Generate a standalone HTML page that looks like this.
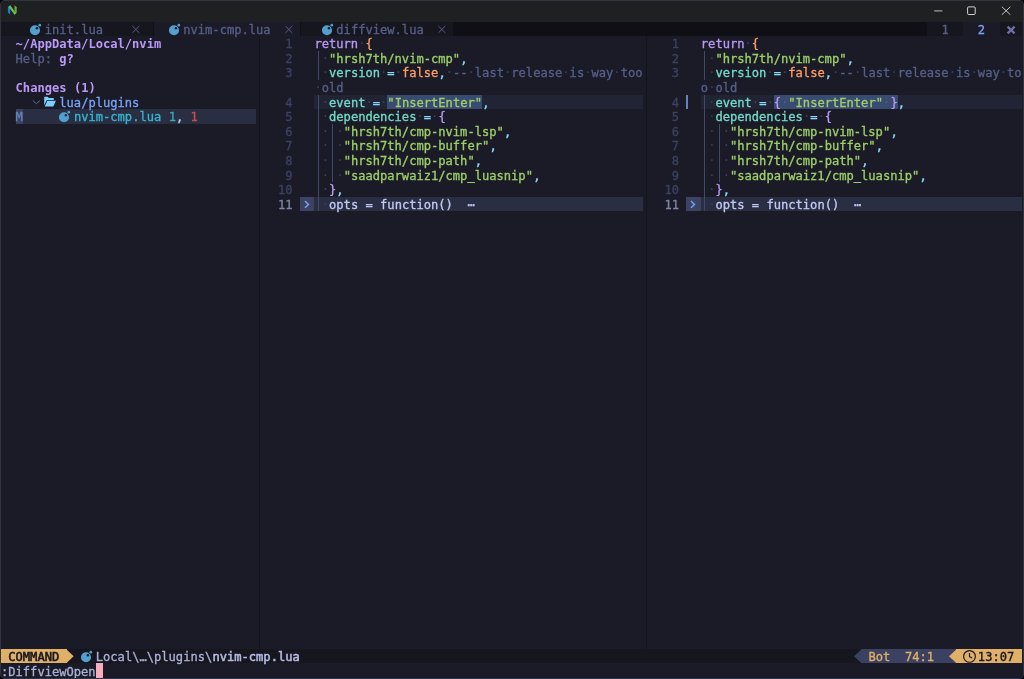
<!DOCTYPE html>
<html lang="en">
<head>
<meta charset="utf-8">
<title>nvim - DiffviewOpen</title>
<style>
html,body{margin:0;padding:0;}
body{width:1024px;height:679px;overflow:hidden;background:#02040f;position:relative;
  font-family:"DejaVu Sans Mono","Liberation Mono",monospace;font-size:12.108px;}
#win{position:absolute;left:0;top:0;width:1024px;height:679px;box-sizing:border-box;
  background:#1a1b26;border:1px solid #30343d;border-bottom-color:#2d3246;border-radius:5px;overflow:hidden;}
#scr{position:absolute;left:-1px;top:-1px;width:1024px;height:679px;will-change:transform;}
#title{position:absolute;left:0;top:0;width:1024px;height:22.1px;background:#1e2022;z-index:5;}
.tb{z-index:6;}
.r{position:absolute;display:block;}
.t{position:absolute;display:block;height:14.59px;line-height:14.59px;white-space:pre;
  font-kerning:none;font-variant-ligatures:none;letter-spacing:0;}
.t{-webkit-text-stroke:0.32px currentColor;}
.b{font-weight:bold;-webkit-text-stroke:0;}
.d{-webkit-text-stroke:0;margin-top:-1px;}
</style>
</head>
<body>
<div id="win"><div id="scr">
<div id="title"></div>
<svg class="r tb" style="left:0;top:0" width="26" height="22" viewBox="0 0 26 22">
<defs><linearGradient id="ng" x1="0" y1="0" x2="0" y2="1"><stop offset="0" stop-color="#70b446"/><stop offset="1" stop-color="#4c963a"/></linearGradient>
<linearGradient id="nb" x1="0" y1="0" x2="0" y2="1"><stop offset="0" stop-color="#1593dd"/><stop offset="1" stop-color="#116fc4"/></linearGradient></defs>
<path d="M7.90 7.23 L10.19 5.19 L10.19 14.72 L7.90 12.69 Z" fill="url(#nb)"/>
<path d="M14.48 5.20 L16.77 7.23 L16.77 12.69 L14.48 14.72 Z" fill="url(#ng)"/>
<path d="M10.19 5.20 L16.16 13.25 L14.48 14.73 L8.51 6.70 Z" fill="#74ba4b"/>
</svg>
<svg class="r tb" style="left:920px;top:0" width="104" height="22" viewBox="0 0 104 22">
<path d="M14.2 10.9 H22.4" stroke="#e6e6e6" stroke-width="0.8" fill="none"/>
<rect x="47.6" y="6.9" width="7.6" height="7.6" rx="1" fill="none" stroke="#e6e6e6" stroke-width="0.9"/>
<path d="M81.9 6.8 L90.3 14.7 M90.3 6.8 L81.9 14.7" stroke="#e6e6e6" stroke-width="0.85" fill="none"/>
</svg>
<div class="r" style="left:1px;top:21.6px;width:153.09px;height:14.59px;background:#16161e;"></div>
<div class="r" style="left:154.09px;top:21.6px;width:145.8px;height:14.59px;background:#1a1b26;"></div>
<div class="r" style="left:299.89px;top:21.6px;width:153.09px;height:14.59px;background:#16161e;"></div>
<div class="r" style="left:452.98px;top:21.6px;width:473.85px;height:14.59px;background:#0f0f15;"></div>
<div class="r" style="left:926.83px;top:21.6px;width:36.45px;height:14.59px;background:#16161e;"></div>
<div class="r" style="left:963.28px;top:21.6px;width:36.45px;height:14.59px;background:#1a1b26;"></div>
<div class="r" style="left:999.73px;top:21.6px;width:21.87px;height:14.59px;background:#16161e;"></div>
<div class="r" style="left:15.58px;top:109.13px;width:240.57px;height:14.59px;background:#292e42;"></div>
<div class="r" style="left:15.58px;top:109.13px;width:7.29px;height:14.59px;background:#3b4163;"></div>
<div class="r" style="left:314.47px;top:94.54px;width:328.05px;height:14.59px;background:#202435;"></div>
<div class="r" style="left:387.37px;top:94.54px;width:94.77px;height:14.59px;background:#394b70;"></div>
<div class="r" style="left:314.47px;top:196.66px;width:328.05px;height:14.59px;background:#292e42;"></div>
<div class="r" style="left:299.89px;top:196.66px;width:14.58px;height:14.59px;background:#3b4264;"></div>
<div class="r" style="left:700.84px;top:94.54px;width:320.76px;height:14.59px;background:#202435;"></div>
<div class="r" style="left:773.74px;top:94.54px;width:123.93px;height:14.59px;background:#394b70;"></div>
<div class="r" style="left:700.84px;top:196.66px;width:320.76px;height:14.59px;background:#292e42;"></div>
<div class="r" style="left:686.26px;top:196.66px;width:14.58px;height:14.59px;background:#3b4264;"></div>
<div class="r" style="left:1px;top:648.88px;width:1020.6px;height:14.59px;background:#16161e;"></div>
<div class="r" style="left:1px;top:648.88px;width:65.61px;height:14.59px;background:#e0af68;"></div>
<div class="r" style="left:861.22px;top:648.88px;width:94.77px;height:14.59px;background:#3b4261;"></div>
<div class="r" style="left:955.99px;top:648.88px;width:65.61px;height:14.59px;background:#e0af68;"></div>
<div class="r" style="left:0px;top:21.6px;width:1px;height:14.59px;background:#16161e;"></div>
<div class="r" style="left:153.29px;top:21.6px;width:1px;height:14.59px;background:#0f0f15;"></div>
<div class="r" style="left:299.59px;top:21.6px;width:1px;height:14.59px;background:#0f0f15;"></div>
<svg class="r" style="left:30.16px;top:21.6px" width="12" height="15" viewBox="0 0 12 15"><circle cx="5" cy="8.3" r="5.05" fill="#51a0cf"/><circle cx="6.9" cy="6.2" r="1.25" fill="#16161e"/><circle cx="9.8" cy="3.2" r="1.35" fill="#51a0cf"/></svg>
<span class="t" style="left:44.74px;top:22.7px;color:#565f89;">init.lua</span>
<svg class="r" style="left:132.22px;top:21.6px" width="8" height="15" viewBox="0 0 8 15"><path d="M0.4 4.0 L7.3 10.9 M7.3 4.0 L0.4 10.9" stroke="#565f89" stroke-width="1" fill="none"/></svg>
<svg class="r" style="left:168.67px;top:21.6px" width="12" height="15" viewBox="0 0 12 15"><circle cx="5" cy="8.3" r="5.05" fill="#51a0cf"/><circle cx="6.9" cy="6.2" r="1.25" fill="#1a1b26"/><circle cx="9.8" cy="3.2" r="1.35" fill="#51a0cf"/></svg>
<span class="t" style="left:183.25px;top:22.7px;color:#565f89;">nvim-cmp.lua</span>
<svg class="r" style="left:285.31px;top:21.6px" width="8" height="15" viewBox="0 0 8 15"><path d="M0.4 4.0 L7.3 10.9 M7.3 4.0 L0.4 10.9" stroke="#565f89" stroke-width="1" fill="none"/></svg>
<svg class="r" style="left:321.76px;top:21.6px" width="12" height="15" viewBox="0 0 12 15"><circle cx="5" cy="8.3" r="5.05" fill="#51a0cf"/><circle cx="6.9" cy="6.2" r="1.25" fill="#16161e"/><circle cx="9.8" cy="3.2" r="1.35" fill="#51a0cf"/></svg>
<span class="t" style="left:336.34px;top:22.7px;color:#565f89;">diffview.lua</span>
<svg class="r" style="left:438.4px;top:21.6px" width="8" height="15" viewBox="0 0 8 15"><path d="M0.4 4.0 L7.3 10.9 M7.3 4.0 L0.4 10.9" stroke="#565f89" stroke-width="1" fill="none"/></svg>
<span class="t" style="left:941.41px;top:22.7px;color:#565f89;">1</span>
<span class="t" style="left:977.86px;top:22.7px;color:#7aa2f7;">2</span>
<svg class="r" style="left:1005.82px;top:21.6px" width="11" height="15" viewBox="0 0 11 15"><path d="M1.6 4.6 L8.6 11.4 M8.6 4.6 L1.6 11.4" stroke="#6a72a5" stroke-width="2.3" fill="none"/></svg>
<span class="t b" style="left:15.58px;top:37.29px;color:#bb9af7;">~/AppData/Local/nvim</span>
<span class="t" style="left:15.58px;top:51.88px;color:#565f89;">Help:</span>
<span class="t b" style="left:59.32px;top:51.88px;color:#bb9af7;">g?</span>
<span class="t b" style="left:15.58px;top:81.05px;color:#bb9af7;">Changes</span>
<span class="t b" style="left:73.9px;top:81.05px;color:#bb9af7;">(1)</span>
<svg class="r" style="left:30.16px;top:94.54px" width="12" height="15" viewBox="0 0 12 15"><path d="M2.8 5.6 L6.4 8.7 L10 5.6" stroke="#5f6890" stroke-width="1" fill="none"/></svg>
<svg class="r" style="left:44.44px;top:93.69px" width="13" height="15" viewBox="0 0 13 15"><path d="M0.2 3.4 Q0.2 2.8 0.8 2.8 L3.6 2.8 L4.8 4.1 L9.2 4.1 Q9.8 4.1 9.8 4.7 L9.8 5.9 L2.9 5.9 L0.2 11.2 Z" fill="#7dcfff"/><path d="M3.4 6.8 L11.9 6.8 L9.3 12.4 L0.7 12.4 Z" fill="#7dcfff"/></svg>
<span class="t" style="left:59.32px;top:95.64px;color:#7aa2f7;">lua/plugins</span>
<span class="t" style="left:15.58px;top:110.23px;color:#6183bb;">M</span>
<svg class="r" style="left:59.32px;top:109.13px" width="12" height="15" viewBox="0 0 12 15"><circle cx="5" cy="8.3" r="5.05" fill="#51a0cf"/><circle cx="6.9" cy="6.2" r="1.25" fill="#292e42"/><circle cx="9.8" cy="3.2" r="1.35" fill="#51a0cf"/></svg>
<span class="t" style="left:73.9px;top:110.23px;color:#36b6d2;">nvim-cmp.lua</span>
<span class="t" style="left:168.67px;top:110.23px;color:#41a6b5;">1</span>
<span class="t" style="left:175.96px;top:110.23px;color:#c0caf5;">,</span>
<span class="t" style="left:190.54px;top:110.23px;color:#c94d4d;">1</span>
<div class="r" style="left:259.19px;top:36.19px;width:1.2px;height:612.7px;background:#13141b;"></div>
<div class="r" style="left:645.56px;top:36.19px;width:1.2px;height:612.7px;background:#13141b;"></div>
<span class="t" style="left:285.31px;top:37.29px;color:#3b4261;">1</span>
<span class="t" style="left:285.31px;top:51.88px;color:#3b4261;">2</span>
<span class="t" style="left:285.31px;top:66.46px;color:#3b4261;">3</span>
<span class="t" style="left:285.31px;top:95.64px;color:#3b4261;">4</span>
<span class="t" style="left:285.31px;top:110.23px;color:#3b4261;">5</span>
<span class="t" style="left:285.31px;top:124.82px;color:#3b4261;">6</span>
<span class="t" style="left:285.31px;top:139.4px;color:#3b4261;">7</span>
<span class="t" style="left:285.31px;top:153.99px;color:#3b4261;">8</span>
<span class="t" style="left:285.31px;top:168.58px;color:#3b4261;">9</span>
<span class="t" style="left:278.02px;top:183.17px;color:#3b4261;">10</span>
<span class="t" style="left:278.02px;top:197.76px;color:#7f85a8;">11</span>
<svg class="r" style="left:299.89px;top:196.66px" width="15" height="15" viewBox="0 0 15 15"><path d="M5.0 4.1 L8.5 7.45 L5.0 10.8" stroke="#7aa2f7" stroke-width="1.4" fill="none"/></svg>
<span class="t" style="left:314.47px;top:37.29px;color:#bb9af7;">return</span>
<span class="t d" style="left:358.21px;top:37.29px;color:#3b4261">·</span>
<span class="t" style="left:365.5px;top:37.29px;color:#ff9e64;">{</span>
<div class="r" style="left:317.56px;top:50.78px;width:1.1px;height:14.59px;background:#414868;"></div>
<span class="t d" style="left:321.76px;top:51.88px;color:#3b4261">·</span>
<span class="t" style="left:329.05px;top:51.88px;color:#9ece6a;">"hrsh7th/nvim-cmp"</span>
<span class="t" style="left:460.27px;top:51.88px;color:#89ddff;">,</span>
<div class="r" style="left:317.56px;top:65.36px;width:1.1px;height:14.59px;background:#414868;"></div>
<span class="t d" style="left:321.76px;top:66.46px;color:#3b4261">·</span>
<span class="t" style="left:329.05px;top:66.46px;color:#73daca;">version</span>
<span class="t d" style="left:380.08px;top:66.46px;color:#3b4261">·</span>
<span class="t" style="left:387.37px;top:66.46px;color:#89ddff;">=</span>
<span class="t d" style="left:394.66px;top:66.46px;color:#3b4261">·</span>
<span class="t" style="left:401.95px;top:66.46px;color:#ff9e64;">false</span>
<span class="t" style="left:438.4px;top:66.46px;color:#89ddff;">,</span>
<span class="t d" style="left:445.69px;top:66.46px;color:#3b4261">·</span>
<span class="t" style="left:452.98px;top:66.46px;color:#565f89;">--</span>
<span class="t d" style="left:467.56px;top:66.46px;color:#3b4261">·</span>
<span class="t" style="left:474.85px;top:66.46px;color:#565f89;">last</span>
<span class="t d" style="left:504.01px;top:66.46px;color:#3b4261">·</span>
<span class="t" style="left:511.3px;top:66.46px;color:#565f89;">release</span>
<span class="t d" style="left:562.33px;top:66.46px;color:#3b4261">·</span>
<span class="t" style="left:569.62px;top:66.46px;color:#565f89;">is</span>
<span class="t d" style="left:584.2px;top:66.46px;color:#3b4261">·</span>
<span class="t" style="left:591.49px;top:66.46px;color:#565f89;">way</span>
<span class="t d" style="left:613.36px;top:66.46px;color:#3b4261">·</span>
<span class="t" style="left:620.65px;top:66.46px;color:#565f89;">too</span>
<span class="t d" style="left:314.47px;top:81.05px;color:#3b4261">·</span>
<span class="t" style="left:321.76px;top:81.05px;color:#565f89;">old</span>
<div class="r" style="left:317.56px;top:94.54px;width:1.1px;height:14.59px;background:#414868;"></div>
<span class="t d" style="left:321.76px;top:95.64px;color:#3b4261">·</span>
<span class="t" style="left:329.05px;top:95.64px;color:#73daca;">event</span>
<span class="t d" style="left:365.5px;top:95.64px;color:#3b4261">·</span>
<span class="t" style="left:372.79px;top:95.64px;color:#89ddff;">=</span>
<span class="t d" style="left:380.08px;top:95.64px;color:#3b4261">·</span>
<span class="t" style="left:387.37px;top:95.64px;color:#9ece6a;">"InsertEnter"</span>
<span class="t" style="left:482.14px;top:95.64px;color:#89ddff;">,</span>
<div class="r" style="left:317.56px;top:109.13px;width:1.1px;height:14.59px;background:#414868;"></div>
<span class="t d" style="left:321.76px;top:110.23px;color:#3b4261">·</span>
<span class="t" style="left:329.05px;top:110.23px;color:#73daca;">dependencies</span>
<span class="t d" style="left:416.53px;top:110.23px;color:#3b4261">·</span>
<span class="t" style="left:423.82px;top:110.23px;color:#89ddff;">=</span>
<span class="t d" style="left:431.11px;top:110.23px;color:#3b4261">·</span>
<span class="t" style="left:438.4px;top:110.23px;color:#bb9af7;">{</span>
<div class="r" style="left:317.56px;top:123.72px;width:1.1px;height:14.59px;background:#414868;"></div>
<span class="t d" style="left:321.76px;top:124.82px;color:#3b4261">·</span>
<div class="r" style="left:332.14px;top:123.72px;width:1.1px;height:14.59px;background:#414868;"></div>
<span class="t d" style="left:336.34px;top:124.82px;color:#3b4261">·</span>
<span class="t" style="left:343.63px;top:124.82px;color:#9ece6a;">"hrsh7th/cmp-nvim-lsp"</span>
<span class="t" style="left:504.01px;top:124.82px;color:#89ddff;">,</span>
<div class="r" style="left:317.56px;top:138.3px;width:1.1px;height:14.59px;background:#414868;"></div>
<span class="t d" style="left:321.76px;top:139.4px;color:#3b4261">·</span>
<div class="r" style="left:332.14px;top:138.3px;width:1.1px;height:14.59px;background:#414868;"></div>
<span class="t d" style="left:336.34px;top:139.4px;color:#3b4261">·</span>
<span class="t" style="left:343.63px;top:139.4px;color:#9ece6a;">"hrsh7th/cmp-buffer"</span>
<span class="t" style="left:489.43px;top:139.4px;color:#89ddff;">,</span>
<div class="r" style="left:317.56px;top:152.89px;width:1.1px;height:14.59px;background:#414868;"></div>
<span class="t d" style="left:321.76px;top:153.99px;color:#3b4261">·</span>
<div class="r" style="left:332.14px;top:152.89px;width:1.1px;height:14.59px;background:#414868;"></div>
<span class="t d" style="left:336.34px;top:153.99px;color:#3b4261">·</span>
<span class="t" style="left:343.63px;top:153.99px;color:#9ece6a;">"hrsh7th/cmp-path"</span>
<span class="t" style="left:474.85px;top:153.99px;color:#89ddff;">,</span>
<div class="r" style="left:317.56px;top:167.48px;width:1.1px;height:14.59px;background:#414868;"></div>
<span class="t d" style="left:321.76px;top:168.58px;color:#3b4261">·</span>
<div class="r" style="left:332.14px;top:167.48px;width:1.1px;height:14.59px;background:#414868;"></div>
<span class="t d" style="left:336.34px;top:168.58px;color:#3b4261">·</span>
<span class="t" style="left:343.63px;top:168.58px;color:#9ece6a;">"saadparwaiz1/cmp_luasnip"</span>
<span class="t" style="left:533.17px;top:168.58px;color:#89ddff;">,</span>
<div class="r" style="left:317.56px;top:182.07px;width:1.1px;height:14.59px;background:#414868;"></div>
<span class="t d" style="left:321.76px;top:183.17px;color:#3b4261">·</span>
<span class="t" style="left:329.05px;top:183.17px;color:#bb9af7;">}</span>
<span class="t" style="left:336.34px;top:183.17px;color:#89ddff;">,</span>
<div class="r" style="left:317.56px;top:196.66px;width:1.1px;height:14.59px;background:#414868;"></div>
<span class="t d" style="left:321.76px;top:197.76px;color:#3b4261">·</span>
<span class="t" style="left:329.05px;top:197.76px;color:#c0caf5;">opts</span>
<span class="t" style="left:365.5px;top:197.76px;color:#c0caf5;">=</span>
<span class="t" style="left:380.08px;top:197.76px;color:#c0caf5;">function()</span>
<span class="t" style="left:467.56px;top:197.76px;color:#c0caf5;">⋯</span>
<span class="t" style="left:671.68px;top:37.29px;color:#3b4261;">1</span>
<span class="t" style="left:671.68px;top:51.88px;color:#3b4261;">2</span>
<span class="t" style="left:671.68px;top:66.46px;color:#3b4261;">3</span>
<span class="t" style="left:671.68px;top:95.64px;color:#3b4261;">4</span>
<span class="t" style="left:671.68px;top:110.23px;color:#3b4261;">5</span>
<span class="t" style="left:671.68px;top:124.82px;color:#3b4261;">6</span>
<span class="t" style="left:671.68px;top:139.4px;color:#3b4261;">7</span>
<span class="t" style="left:671.68px;top:153.99px;color:#3b4261;">8</span>
<span class="t" style="left:671.68px;top:168.58px;color:#3b4261;">9</span>
<span class="t" style="left:664.39px;top:183.17px;color:#3b4261;">10</span>
<span class="t" style="left:664.39px;top:197.76px;color:#7f85a8;">11</span>
<svg class="r" style="left:686.26px;top:196.66px" width="15" height="15" viewBox="0 0 15 15"><path d="M5.0 4.1 L8.5 7.45 L5.0 10.8" stroke="#7aa2f7" stroke-width="1.4" fill="none"/></svg>
<div class="r" style="left:686.46px;top:94.84px;width:1.6px;height:13.99px;background:#6183bb;"></div>
<span class="t" style="left:700.84px;top:37.29px;color:#bb9af7;">return</span>
<span class="t d" style="left:744.58px;top:37.29px;color:#3b4261">·</span>
<span class="t" style="left:751.87px;top:37.29px;color:#ff9e64;">{</span>
<div class="r" style="left:703.94px;top:50.78px;width:1.1px;height:14.59px;background:#414868;"></div>
<span class="t d" style="left:708.13px;top:51.88px;color:#3b4261">·</span>
<span class="t" style="left:715.42px;top:51.88px;color:#9ece6a;">"hrsh7th/nvim-cmp"</span>
<span class="t" style="left:846.64px;top:51.88px;color:#89ddff;">,</span>
<div class="r" style="left:703.94px;top:65.36px;width:1.1px;height:14.59px;background:#414868;"></div>
<span class="t d" style="left:708.13px;top:66.46px;color:#3b4261">·</span>
<span class="t" style="left:715.42px;top:66.46px;color:#73daca;">version</span>
<span class="t d" style="left:766.45px;top:66.46px;color:#3b4261">·</span>
<span class="t" style="left:773.74px;top:66.46px;color:#89ddff;">=</span>
<span class="t d" style="left:781.03px;top:66.46px;color:#3b4261">·</span>
<span class="t" style="left:788.32px;top:66.46px;color:#ff9e64;">false</span>
<span class="t" style="left:824.77px;top:66.46px;color:#89ddff;">,</span>
<span class="t d" style="left:832.06px;top:66.46px;color:#3b4261">·</span>
<span class="t" style="left:839.35px;top:66.46px;color:#565f89;">--</span>
<span class="t d" style="left:853.93px;top:66.46px;color:#3b4261">·</span>
<span class="t" style="left:861.22px;top:66.46px;color:#565f89;">last</span>
<span class="t d" style="left:890.38px;top:66.46px;color:#3b4261">·</span>
<span class="t" style="left:897.67px;top:66.46px;color:#565f89;">release</span>
<span class="t d" style="left:948.7px;top:66.46px;color:#3b4261">·</span>
<span class="t" style="left:955.99px;top:66.46px;color:#565f89;">is</span>
<span class="t d" style="left:970.57px;top:66.46px;color:#3b4261">·</span>
<span class="t" style="left:977.86px;top:66.46px;color:#565f89;">way</span>
<span class="t d" style="left:999.73px;top:66.46px;color:#3b4261">·</span>
<span class="t" style="left:1007.02px;top:66.46px;color:#565f89;">to</span>
<span class="t" style="left:700.84px;top:81.05px;color:#565f89;">o</span>
<span class="t d" style="left:708.13px;top:81.05px;color:#3b4261">·</span>
<span class="t" style="left:715.42px;top:81.05px;color:#565f89;">old</span>
<div class="r" style="left:703.94px;top:94.54px;width:1.1px;height:14.59px;background:#414868;"></div>
<span class="t d" style="left:708.13px;top:95.64px;color:#3b4261">·</span>
<span class="t" style="left:715.42px;top:95.64px;color:#73daca;">event</span>
<span class="t d" style="left:751.87px;top:95.64px;color:#3b4261">·</span>
<span class="t" style="left:759.16px;top:95.64px;color:#89ddff;">=</span>
<span class="t d" style="left:766.45px;top:95.64px;color:#3b4261">·</span>
<span class="t" style="left:773.74px;top:95.64px;color:#bb9af7;">{</span>
<span class="t d" style="left:781.03px;top:95.64px;color:#51608c">·</span>
<span class="t d" style="left:883.09px;top:95.64px;color:#51608c">·</span>
<span class="t" style="left:788.32px;top:95.64px;color:#9ece6a;">"InsertEnter"</span>
<span class="t" style="left:890.38px;top:95.64px;color:#bb9af7;">}</span>
<span class="t" style="left:897.67px;top:95.64px;color:#89ddff;">,</span>
<div class="r" style="left:703.94px;top:109.13px;width:1.1px;height:14.59px;background:#414868;"></div>
<span class="t d" style="left:708.13px;top:110.23px;color:#3b4261">·</span>
<span class="t" style="left:715.42px;top:110.23px;color:#73daca;">dependencies</span>
<span class="t d" style="left:802.9px;top:110.23px;color:#3b4261">·</span>
<span class="t" style="left:810.19px;top:110.23px;color:#89ddff;">=</span>
<span class="t d" style="left:817.48px;top:110.23px;color:#3b4261">·</span>
<span class="t" style="left:824.77px;top:110.23px;color:#bb9af7;">{</span>
<div class="r" style="left:703.94px;top:123.72px;width:1.1px;height:14.59px;background:#414868;"></div>
<span class="t d" style="left:708.13px;top:124.82px;color:#3b4261">·</span>
<div class="r" style="left:718.52px;top:123.72px;width:1.1px;height:14.59px;background:#414868;"></div>
<span class="t d" style="left:722.71px;top:124.82px;color:#3b4261">·</span>
<span class="t" style="left:730px;top:124.82px;color:#9ece6a;">"hrsh7th/cmp-nvim-lsp"</span>
<span class="t" style="left:890.38px;top:124.82px;color:#89ddff;">,</span>
<div class="r" style="left:703.94px;top:138.3px;width:1.1px;height:14.59px;background:#414868;"></div>
<span class="t d" style="left:708.13px;top:139.4px;color:#3b4261">·</span>
<div class="r" style="left:718.52px;top:138.3px;width:1.1px;height:14.59px;background:#414868;"></div>
<span class="t d" style="left:722.71px;top:139.4px;color:#3b4261">·</span>
<span class="t" style="left:730px;top:139.4px;color:#9ece6a;">"hrsh7th/cmp-buffer"</span>
<span class="t" style="left:875.8px;top:139.4px;color:#89ddff;">,</span>
<div class="r" style="left:703.94px;top:152.89px;width:1.1px;height:14.59px;background:#414868;"></div>
<span class="t d" style="left:708.13px;top:153.99px;color:#3b4261">·</span>
<div class="r" style="left:718.52px;top:152.89px;width:1.1px;height:14.59px;background:#414868;"></div>
<span class="t d" style="left:722.71px;top:153.99px;color:#3b4261">·</span>
<span class="t" style="left:730px;top:153.99px;color:#9ece6a;">"hrsh7th/cmp-path"</span>
<span class="t" style="left:861.22px;top:153.99px;color:#89ddff;">,</span>
<div class="r" style="left:703.94px;top:167.48px;width:1.1px;height:14.59px;background:#414868;"></div>
<span class="t d" style="left:708.13px;top:168.58px;color:#3b4261">·</span>
<div class="r" style="left:718.52px;top:167.48px;width:1.1px;height:14.59px;background:#414868;"></div>
<span class="t d" style="left:722.71px;top:168.58px;color:#3b4261">·</span>
<span class="t" style="left:730px;top:168.58px;color:#9ece6a;">"saadparwaiz1/cmp_luasnip"</span>
<span class="t" style="left:919.54px;top:168.58px;color:#89ddff;">,</span>
<div class="r" style="left:703.94px;top:182.07px;width:1.1px;height:14.59px;background:#414868;"></div>
<span class="t d" style="left:708.13px;top:183.17px;color:#3b4261">·</span>
<span class="t" style="left:715.42px;top:183.17px;color:#bb9af7;">}</span>
<span class="t" style="left:722.71px;top:183.17px;color:#89ddff;">,</span>
<div class="r" style="left:703.94px;top:196.66px;width:1.1px;height:14.59px;background:#414868;"></div>
<span class="t d" style="left:708.13px;top:197.76px;color:#3b4261">·</span>
<span class="t" style="left:715.42px;top:197.76px;color:#c0caf5;">opts</span>
<span class="t" style="left:751.87px;top:197.76px;color:#c0caf5;">=</span>
<span class="t" style="left:766.45px;top:197.76px;color:#c0caf5;">function()</span>
<span class="t" style="left:853.93px;top:197.76px;color:#c0caf5;">⋯</span>
<span class="t" style="left:8.29px;top:649.98px;color:#15161e;-webkit-text-stroke:0.55px currentColor;">COMMAND</span>
<svg class="r" style="left:66.41px;top:648.88px" width="7.89" height="14.59" viewBox="0 0 7.89 14.59"><path d="M0 0 L7.69 7.29 L0 14.59 Z" fill="#e0af68"/></svg>
<svg class="r" style="left:81.19px;top:648.88px" width="12" height="15" viewBox="0 0 12 15"><circle cx="5" cy="8.3" r="5.05" fill="#51a0cf"/><circle cx="6.9" cy="6.2" r="1.25" fill="#16161e"/><circle cx="9.8" cy="3.2" r="1.35" fill="#51a0cf"/></svg>
<span class="t" style="left:95.77px;top:649.98px;color:#a9b1d6;">Local\…\plugins\</span>
<span class="t" style="left:212.41px;top:649.98px;color:#b3bbe2;-webkit-text-stroke:0.55px currentColor;">nvim-cmp.lua</span>
<svg class="r" style="left:853.83px;top:648.88px" width="7.89" height="14.59" viewBox="0 0 7.89 14.59"><path d="M7.89 0 L0 7.29 L7.89 14.59 Z" fill="#3b4261"/></svg>
<span class="t" style="left:868.51px;top:649.98px;color:#e0af68;">Bot</span>
<span class="t" style="left:904.96px;top:649.98px;color:#e0af68;">74:1</span>
<svg class="r" style="left:948.6px;top:648.88px" width="7.89" height="14.59" viewBox="0 0 7.89 14.59"><path d="M7.89 0 L0 7.29 L7.89 14.59 Z" fill="#e0af68"/></svg>
<svg class="r" style="left:963.28px;top:648.88px" width="14" height="15" viewBox="0 0 14 15"><circle cx="6.5" cy="7.4" r="5.85" fill="none" stroke="#15161e" stroke-width="1.15"/><path d="M6.5 4.0 L6.5 7.7 L9.2 9.0" fill="none" stroke="#15161e" stroke-width="1.15"/></svg>
<span class="t" style="left:977.86px;top:649.98px;color:#15161e;">13:07</span>
<span class="t" style="left:1px;top:664.57px;color:#a9b1d6;">:DiffviewOpen</span>
<div class="r" style="left:95.77px;top:663.37px;width:7.29px;height:14.59px;background:#f7adbb;"></div>
</div></div>
</body>
</html>
